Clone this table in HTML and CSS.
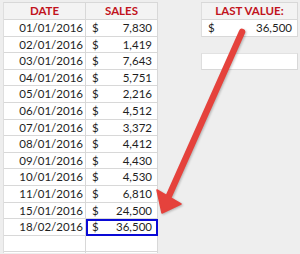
FILE: index.html
```html
<!DOCTYPE html>
<html>
<head>
<meta charset="utf-8">
<link rel="stylesheet" href="styles.css">
</head>
<body>
<div class="page">
  <div class="sheet left">
    <div class="cell head">DATE</div>
    <div class="cell head">SALES</div>
    <div class="cell date">01/01/2016</div><div class="cell money"><span>$</span><span>7,830</span></div>
    <div class="cell date">02/01/2016</div><div class="cell money"><span>$</span><span>1,419</span></div>
    <div class="cell date">03/01/2016</div><div class="cell money"><span>$</span><span>7,643</span></div>
    <div class="cell date">04/01/2016</div><div class="cell money"><span>$</span><span>5,751</span></div>
    <div class="cell date">05/01/2016</div><div class="cell money"><span>$</span><span>2,216</span></div>
    <div class="cell date">06/01/2016</div><div class="cell money"><span>$</span><span>4,512</span></div>
    <div class="cell date">07/01/2016</div><div class="cell money"><span>$</span><span>3,372</span></div>
    <div class="cell date">08/01/2016</div><div class="cell money"><span>$</span><span>4,412</span></div>
    <div class="cell date">09/01/2016</div><div class="cell money"><span>$</span><span>4,430</span></div>
    <div class="cell date">10/01/2016</div><div class="cell money"><span>$</span><span>4,530</span></div>
    <div class="cell date">11/01/2016</div><div class="cell money"><span>$</span><span>6,810</span></div>
    <div class="cell date">15/01/2016</div><div class="cell money"><span>$</span><span>24,500</span></div>
    <div class="cell date">18/02/2016</div><div class="cell money selected"><span>$</span><span>36,500</span></div>
    <div class="cell"></div><div class="cell"></div>
    <div class="cell stub"></div><div class="cell stub"></div>
  </div>
  <div class="right">
    <div class="cell head wide">LAST VALUE:</div>
    <div class="cell money wide"><span>$</span><span>36,500</span></div>
    <div class="spacer"></div>
    <div class="cell wide"></div>
  </div>
</div>
<svg class="arrow" width="300" height="254" viewBox="0 0 300 254">
  <line x1="242" y1="32" x2="168" y2="198" stroke="#e5423c" stroke-width="6.5" stroke-linecap="round"/>
  <polygon points="162,213 157,190 181,204" fill="#e5423c" stroke="#e5423c" stroke-width="1.5" stroke-linejoin="round"/>
</svg>
</body>
</html>
```
FILE: styles.css
```css
html, body {
  margin: 0;
  padding: 0;
  background: #eeeeee;
  width: 300px;
  height: 254px;
  overflow: hidden;
}
body {
  font-family: Lato, "Liberation Sans", sans-serif;
  font-size: 11.5px;
  color: #1e1e1e;
  position: relative;
}
.page {
  display: flex;
  align-items: flex-start;
  gap: 43px;
  padding: 2px 0 0 3px;
}
.sheet {
  display: grid;
  grid-template-columns: 82px 72px;
  grid-template-rows: 17px;
  grid-auto-rows: 16.6px;
  border-top: 1px solid #d8d8d8;
  border-left: 1px solid #dedede;
}
.cell {
  box-sizing: border-box;
  background: #ffffff;
  border-right: 1px solid #d8d8d8;
  border-bottom: 1px solid #d8d8d8;
  display: flex;
  align-items: center;
  line-height: 1;
}
.sheet .cell.stub {
  height: 1px;
  border-bottom: none;
}
.sheet {
  grid-template-rows: 17px repeat(14, 16.6px) 1px;
}
.head {
  background: #f3f3f3;
  color: #c1121c;
  font-weight: 700;
  justify-content: center;
  font-size: 11.5px;
}
.date {
  justify-content: flex-end;
  padding-right: 2px;
}
.money {
  justify-content: space-between;
  padding: 0 5px 0 6px;
}
.selected {
  outline: 2px solid #0a0ad6;
  outline-offset: -2px;
}
.right {
  display: flex;
  flex-direction: column;
  width: 97px;
  border-top: 1px solid #d8d8d8;
}
.wide {
  height: 16.6px;
  border-left: 1px solid #dedede;
}
.right .head {
  height: 17px;
}
.spacer {
  height: 16.6px;
}
.right .spacer + .cell {
  border-top: 1px solid #e2e2e2;
}
.arrow {
  position: absolute;
  left: 0;
  top: 0;
  pointer-events: none;
  filter: drop-shadow(1px 1px 1px rgba(0,0,0,0.25));
}
```
